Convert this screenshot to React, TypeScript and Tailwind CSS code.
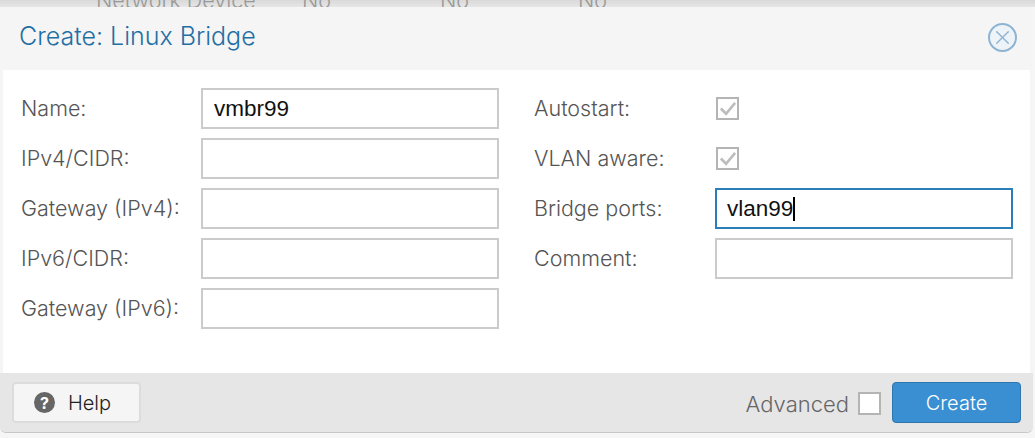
import { X } from "lucide-react";

const leftFields = [
  { label: "Name:", value: "vmbr99" },
  { label: "IPv4/CIDR:", value: "" },
  { label: "Gateway (IPv4):", value: "" },
  { label: "IPv6/CIDR:", value: "" },
  { label: "Gateway (IPv6):", value: "" },
];

function Label({ children }: { children: string }) {
  return <span className="text-[21.5px] font-light text-[#555]">{children}</span>;
}

function TextBox({ value = "", focused = false }: { value?: string; focused?: boolean }) {
  return (
    <div
      className={
        focused
          ? "flex h-[41px] w-[298px] items-center border-2 border-[#2b7fb8] bg-white pl-[10px] font-['Liberation_Sans'] text-[22.5px] text-[#111]"
          : "flex h-[41px] w-[298px] items-center border-2 border-[#cbcbcb] bg-white pl-[11px] font-['Liberation_Sans'] text-[22.5px] text-[#111]"
      }
    >
      {value}
      {focused && <span className="h-[24px] w-[2px] bg-black" />}
    </div>
  );
}

function CheckBox({ checked = false }: { checked?: boolean }) {
  return (
    <div className="flex h-[23px] w-[23px] items-center justify-center border-2 border-[#b4b4b4] bg-white">
      {checked && (
        <svg viewBox="0 0 20 20" className="h-[19px] w-[19px]" fill="none">
          <path d="M3 10 L8.5 15.5 L18 4" stroke="#bdbdbd" strokeWidth="2.8" />
        </svg>
      )}
    </div>
  );
}

export default function App() {
  return (
    <div
      className="flex h-[438px] w-[1035px] flex-col overflow-hidden bg-[#f6f6f6] pr-[2px]"
      style={{ fontFamily: "Inter, 'Liberation Sans', sans-serif" }}
    >
      {/* table behind the dialog, nearly hidden */}
      <div className="h-[7px] w-[1035px] shrink-0 overflow-hidden bg-gradient-to-b from-[#d9d9d9] to-[#e6e6e6]">
        <div className="-mt-[12px] flex pl-[96px] text-[21.5px] font-light leading-[24px] text-[#999]">
          <span className="w-[206px]">Network Device</span>
          <span className="w-[138px]">No</span>
          <span className="w-[138px]">No</span>
          <span>No</span>
        </div>
      </div>

      <div className="flex h-[426px] flex-col overflow-hidden rounded-[6px] border-b border-[#c8c8c8] bg-[#f5f5f5]">
        <div className="flex h-[63px] shrink-0 items-center justify-between pb-[3px] pl-[19px] pr-[16px]">
          <h1 className="text-[25px] font-light text-[#1f6fa5]">Create: Linux Bridge</h1>
          <div className="flex h-[29px] w-[29px] items-center justify-center rounded-full border-2 border-[#8db4d3] bg-[#eef3f7]">
            <X className="h-[23px] w-[23px] text-[#8db4d3]" strokeWidth={1.5} />
          </div>
        </div>

        <div className="mx-[3px] flex h-[303px] shrink-0 gap-[35px] bg-white pl-[18px] pt-[18px]">
          <div className="flex flex-col gap-[9px]">
            {leftFields.map((field) => (
              <div key={field.label} className="flex w-[478px] items-center justify-between">
                <Label>{field.label}</Label>
                <TextBox value={field.value} />
              </div>
            ))}
          </div>
          <div className="flex flex-col gap-[9px]">
            <div className="flex h-[41px] items-center">
              <span className="w-[182px]"><Label>Autostart:</Label></span>
              <CheckBox checked />
            </div>
            <div className="flex h-[41px] items-center">
              <span className="w-[182px]"><Label>VLAN aware:</Label></span>
              <CheckBox checked />
            </div>
            <div className="flex w-[479px] items-center justify-between">
              <Label>Bridge ports:</Label>
              <TextBox value="vlan99" focused />
            </div>
            <div className="flex w-[479px] items-center justify-between">
              <Label>Comment:</Label>
              <TextBox />
            </div>
          </div>
        </div>

        <div className="flex flex-1 items-center justify-between bg-[#e6e6e6] pl-[12px] pr-[12px]">
          <button className="flex h-[41px] w-[129px] items-center justify-center gap-[13px] rounded-[4px] border-2 border-[#dcdcdc] bg-[#f5f5f5] pr-[8px] text-[20px] font-light text-[#222]">
            <span className="flex h-[21px] w-[21px] items-center justify-center rounded-full bg-[#666] text-[16px] font-bold text-white">?</span>
            Help
          </button>
          <div className="flex items-center">
            <span className="mt-[4px] text-[22px] font-light text-[#666]">Advanced</span>
            <div className="ml-[9px] mr-[11px] mt-[2px]"><CheckBox /></div>
            <button className="h-[41px] w-[129px] rounded-[4px] border border-[#2f76ad] bg-[#3a8fd3] pt-[1px] text-[20px] font-light text-white">
              Create
            </button>
          </div>
        </div>
      </div>
    </div>
  );
}
